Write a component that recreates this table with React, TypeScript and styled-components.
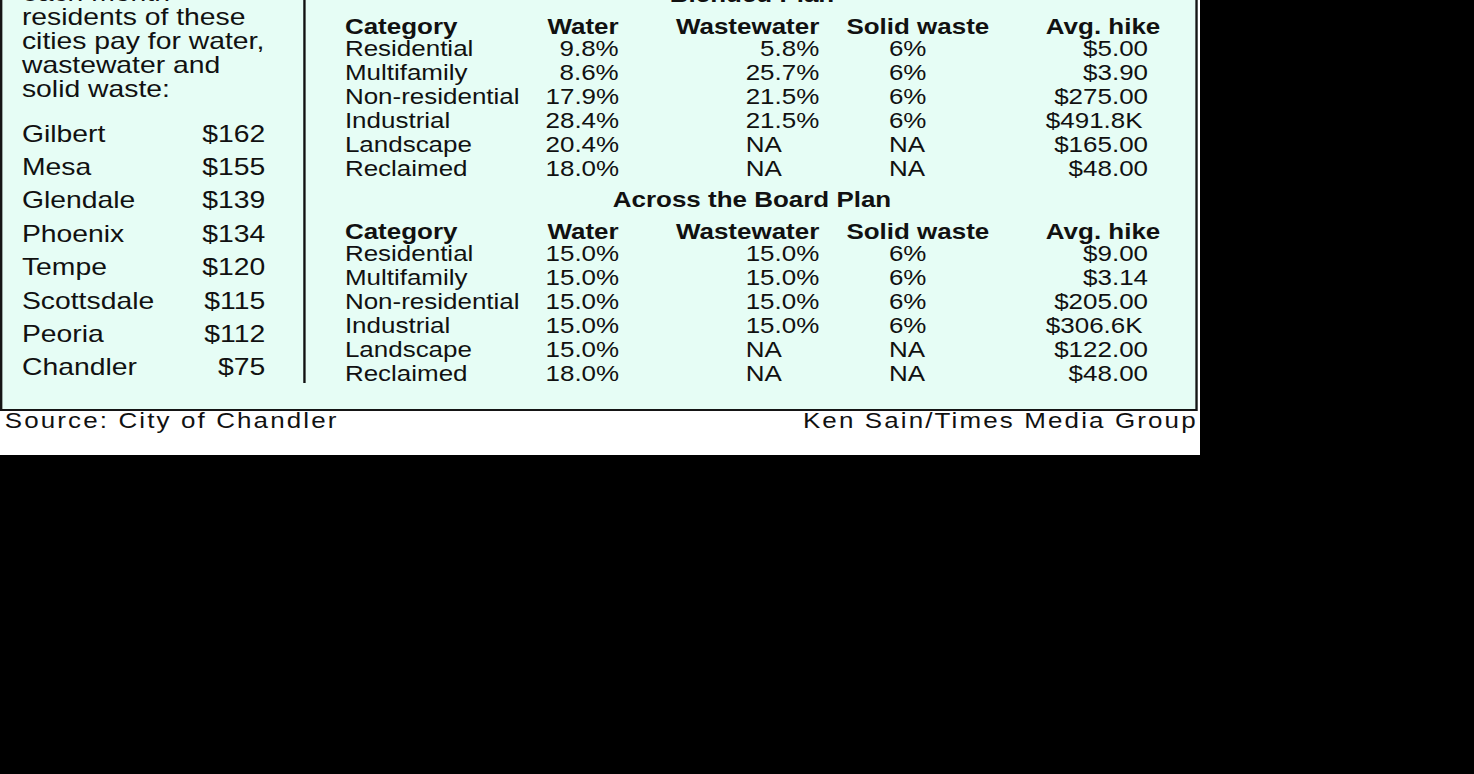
import React from "react";
import styled, { createGlobalStyle } from "styled-components";

const GlobalStyle = createGlobalStyle`
  html, body {
    margin: 0;
    padding: 0;
    background: #000;
  }
  body {
    font-family: "Liberation Sans", Arial, sans-serif;
    color: #111;
  }
`;

// the graphic is a stretched newspaper chart, cropped at the top
const Frame = styled.div`
  width: 1200px;
  height: 455px;
  overflow: hidden;
  background: #fff;
  display: flex;
  flex-direction: column;
  justify-content: flex-end;
`;

const Stretch = styled.div`
  flex-shrink: 0;
  width: 1017px;
  transform: scaleX(1.18);
  transform-origin: 0 0;
`;

const Box = styled.div`
  margin-right: 2px;
  background: #e6fdf5;
  border: 2px solid #151515;
  padding: 10px 0 23px;
  display: flex;
  align-items: flex-start;
`;

const LeftPanel = styled.div`
  width: 254.8px;
  box-sizing: border-box;
  padding: 1.3px 32px 0 16.6px;
  font-size: 24px;
`;

const Intro = styled.div`
  line-height: 24px;
  margin-bottom: 15.3px;
  white-space: nowrap;
`;

const CityRow = styled.div`
  display: flex;
  justify-content: space-between;
  line-height: 33.4px;
`;

const Divider = styled.div`
  align-self: stretch;
  width: 2.5px;
  background: #111;
  margin-bottom: 3px;
`;

const Table = styled.div`
  flex: 1;
  padding-left: 33px;
  display: flex;
  flex-direction: column;
  gap: 4px;
`;

const Section = styled.div`
  display: grid;
  grid-template-columns: 170px 62px 170px 192px 104px;
  font-size: 22px;
`;

const Title = styled.div`
  grid-column: 1 / -1;
  text-align: center;
  font-weight: 700;
  line-height: 30px;
  padding: 0 8px 6px 0;
`;

const Cell = styled.div<{ $head?: boolean; $align?: "left" | "right"; $inset?: number }>`
  white-space: nowrap;
  font-weight: ${(p) => (p.$head ? 700 : 400)};
  line-height: ${(p) => (p.$head ? "21px" : "24px")};
  text-align: ${(p) => p.$align || "left"};
  padding-left: ${(p) => (p.$align !== "right" ? p.$inset || 0 : 0)}px;
  padding-right: ${(p) => (p.$align === "right" ? p.$inset || 0 : 0)}px;
`;

const Footer = styled.div`
  display: flex;
  justify-content: space-between;
  padding: 0 2px 24px 4px;
  font-size: 22px;
  line-height: 20px;
  letter-spacing: 1.8px;
  white-space: nowrap;
`;

const introLines = [
  "each month",
  "residents of these",
  "cities pay for water,",
  "wastewater and",
  "solid waste:",
];

const cities: [string, string][] = [
  ["Gilbert", "$162"],
  ["Mesa", "$155"],
  ["Glendale", "$139"],
  ["Phoenix", "$134"],
  ["Tempe", "$120"],
  ["Scottsdale", "$115"],
  ["Peoria", "$112"],
  ["Chandler", "$75"],
];

type Plan = { title: string; rows: string[][] };

const plans: Plan[] = [
  {
    title: "Blended Plan",
    rows: [
      ["Residential", "9.8%", "5.8%", "6%", "$5.00"],
      ["Multifamily", "8.6%", "25.7%", "6%", "$3.90"],
      ["Non-residential", "17.9%", "21.5%", "6%", "$275.00"],
      ["Industrial", "28.4%", "21.5%", "6%", "$491.8K"],
      ["Landscape", "20.4%", "NA", "NA", "$165.00"],
      ["Reclaimed", "18.0%", "NA", "NA", "$48.00"],
    ],
  },
  {
    title: "Across the Board Plan",
    rows: [
      ["Residential", "15.0%", "15.0%", "6%", "$9.00"],
      ["Multifamily", "15.0%", "15.0%", "6%", "$3.14"],
      ["Non-residential", "15.0%", "15.0%", "6%", "$205.00"],
      ["Industrial", "15.0%", "15.0%", "6%", "$306.6K"],
      ["Landscape", "15.0%", "NA", "NA", "$122.00"],
      ["Reclaimed", "18.0%", "NA", "NA", "$48.00"],
    ],
  },
];

const PlanTable = ({ plan }: { plan: Plan }) => (
  <Section>
    <Title>{plan.title}</Title>
    <Cell $head>Category</Cell>
    <Cell $head $align="right">Water</Cell>
    <Cell $head $align="right">Wastewater</Cell>
    <Cell $head $inset={23}>Solid waste</Cell>
    <Cell $head>Avg. hike</Cell>
    {plan.rows.map(([cat, water, waste, solid, hike]) => (
      <React.Fragment key={cat}>
        <Cell>{cat}</Cell>
        <Cell $align="right">{water}</Cell>
        {waste === "NA" ? (
          <Cell $inset={107.7}>{waste}</Cell>
        ) : (
          <Cell $align="right">{waste}</Cell>
        )}
        <Cell $inset={59}>{solid}</Cell>
        {hike.endsWith("K") ? (
          <Cell>{hike}</Cell>
        ) : (
          <Cell $align="right" $inset={17.4}>{hike}</Cell>
        )}
      </React.Fragment>
    ))}
  </Section>
);

export default function App() {
  return (
    <>
      <GlobalStyle />
      <Frame>
        <Stretch>
          <Box>
            <LeftPanel>
              <Intro>
                {introLines.map((l) => (
                  <div key={l}>{l}</div>
                ))}
              </Intro>
              {cities.map(([name, cost]) => (
                <CityRow key={name}>
                  <span>{name}</span>
                  <span>{cost}</span>
                </CityRow>
              ))}
            </LeftPanel>
            <Divider />
            <Table>
              {plans.map((p) => (
                <PlanTable key={p.title} plan={p} />
              ))}
            </Table>
          </Box>
          <Footer>
            <span>Source: City of Chandler</span>
            <span>Ken Sain/Times Media Group</span>
          </Footer>
        </Stretch>
      </Frame>
    </>
  );
}
